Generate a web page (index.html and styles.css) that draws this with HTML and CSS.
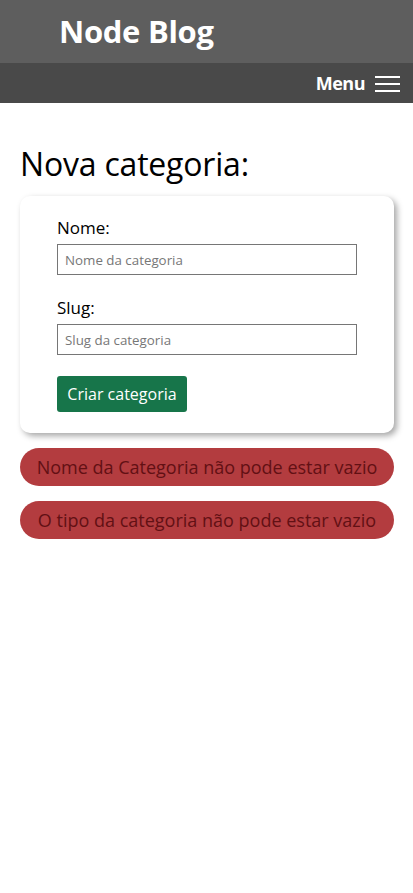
FILE: index.html
```html
<!DOCTYPE html>
<html lang="pt">
<head>
<meta charset="utf-8">
<meta name="viewport" content="width=device-width, initial-scale=1">
<title>Node Blog</title>
<link rel="stylesheet" href="styles.css">
</head>
<body>
<header class="site-header">
  <div class="brand">Node Blog</div>
  <nav class="navbar">
    <span class="menu-label">Menu</span>
    <span class="hamburger" aria-hidden="true"><i></i><i></i><i></i></span>
  </nav>
</header>
<main class="content">
  <h1 class="page-title">Nova categoria:</h1>
  <form class="card">
    <label class="field-label" for="nome">Nome:</label>
    <input class="field-input" id="nome" type="text" placeholder="Nome da categoria">
    <label class="field-label" for="slug">Slug:</label>
    <input class="field-input" id="slug" type="text" placeholder="Slug da categoria">
    <button class="btn-submit" type="button">Criar categoria</button>
  </form>
  <div class="alert">Nome da Categoria não pode estar vazio</div>
  <div class="alert">O tipo da categoria não pode estar vazio</div>
</main>
</body>
</html>
```
FILE: styles.css
```css
* { box-sizing: border-box; }
html, body { margin: 0; padding: 0; background: #fff; }
body { font-family: "Open Sans", "Noto Sans", sans-serif; color: #000; }

.site-header { display: flex; flex-direction: column; }
.brand {
  height: 63px;
  background: #5e5e5e;
  color: #fff;
  font-weight: 700;
  font-size: 31px;
  line-height: 63px;
  padding-left: 59px;
  letter-spacing: -0.3px;
}
.navbar {
  height: 40px;
  background: #494949;
  display: flex;
  align-items: center;
  justify-content: flex-end;
  padding-right: 13px;
  gap: 10px;
}
.menu-label {
  color: #fff;
  font-weight: 700;
  font-size: 18px;
  letter-spacing: -0.5px;
}
.hamburger {
  display: flex;
  flex-direction: column;
  gap: 5px;
  width: 25px;
  margin-top: 1px;
}
.hamburger i { display: block; height: 2px; background: #fff; }

.content { padding: 0 19px 0 20px; }
.page-title {
  margin: 38px 0 10px;
  font-size: 32px;
  font-weight: 400;
  line-height: 45px;
  letter-spacing: -0.2px;
}
.card {
  background: #fff;
  border-radius: 10px;
  box-shadow: 3px 3px 6px rgba(0,0,0,0.35);
  padding: 20px 37px 21px 37px;
  display: flex;
  flex-direction: column;
  align-items: flex-start;
  margin-bottom: 15px;
}
.field-label {
  font-size: 17px;
  line-height: 24px;
  color: #000;
  margin-bottom: 4px;
}
.field-input {
  width: 300px;
  height: 31px;
  border: 1px solid #767676;
  border-radius: 0;
  padding: 0 7px;
  font-family: "Open Sans", sans-serif;
  font-size: 13.33px;
  margin-bottom: 21px;
  color: #000;
}
.field-input::placeholder { color: #777; }
.btn-submit {
  margin-top: 0;
  background: #17754a;
  color: #fff;
  border: 0;
  border-radius: 3px;
  height: 36px;
  width: 130px;
  font-family: "Open Sans", sans-serif;
  font-size: 16px;
  padding: 0;
}
.alert {
  background: #b33c3f;
  color: #621014;
  border-radius: 19px;
  height: 38px;
  display: flex;
  align-items: center;
  justify-content: center;
  font-size: 18px;
  margin-bottom: 15px;
  white-space: nowrap;
}
```
